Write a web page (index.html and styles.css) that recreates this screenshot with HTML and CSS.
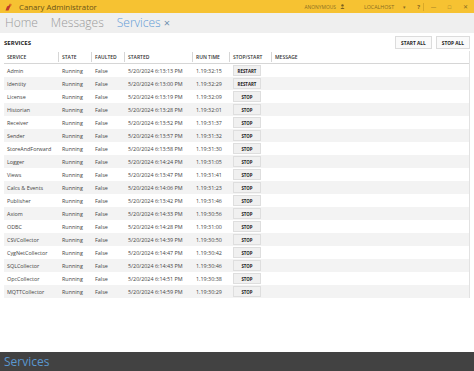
FILE: index.html
```html
<!DOCTYPE html>
<html lang="en">
<head>
  <meta charset="UTF-8">
  <title>Canary Administrator</title>
  <link rel="stylesheet" href="styles.css">
</head>
<body>
  <!-- Window title bar -->
  <div class="titlebar">
    <div class="title-left">
      <svg class="app-icon" width="7" height="8" viewBox="0 0 7 8">
        <path d="M0.5 7.5 L2 3.5 L4 2.5 L5 0.5 L6.5 2 L5 4 L3.5 7.5 Z" fill="#c0392b"/>
        <path d="M4.5 2 L6 0.8 L6.8 1.6 L5.5 3 Z" fill="#e67e22"/>
      </svg>
      <span class="app-title">Canary Administrator</span>
    </div>
    <div class="title-right">
      <span>ANONYMOUS</span>
      <svg class="user-icon" width="5" height="5" viewBox="0 0 5 5"><circle cx="2.5" cy="1.4" r="1.2" fill="#7a6020"/><path d="M0.4 5 Q2.5 1.8 4.6 5 Z" fill="#7a6020"/></svg>
      <span class="host">LOCALHOST</span>
      <span class="caret">&#9662;</span>
      <span class="help">?</span>
      <span class="divider"></span>
      <span class="winbtn">&#8212;</span>
      <span class="winbtn">&#9633;</span>
      <span class="winbtn">&#10005;</span>
    </div>
  </div>

  <!-- Tabs -->
  <div class="tabbar">
    <span class="tab">Home</span>
    <span class="tab">Messages</span>
    <span class="tab active">Services <span class="tab-close">&#215;</span></span>
  </div>

  <div class="content">
    <div class="toolbar">
      <span class="section-title">SERVICES</span>
      <div class="toolbar-buttons">
        <button class="btn">START ALL</button>
        <button class="btn">STOP ALL</button>
      </div>
    </div>

    <div class="table">
      <div class="row head">
        <div class="cell">SERVICE</div>
        <div class="cell">STATE</div>
        <div class="cell">FAULTED</div>
        <div class="cell">STARTED</div>
        <div class="cell">RUN TIME</div>
        <div class="cell">STOP/START</div>
        <div class="cell">MESSAGE</div>
      </div>
      <div class="row"><div class="cell">Admin</div><div class="cell">Running</div><div class="cell">False</div><div class="cell">5/20/2024 6:13:13 PM</div><div class="cell">1.19:32:15</div><div class="cell"><button class="small-btn">RESTART</button></div><div class="cell"></div></div>
      <div class="row"><div class="cell">Identity</div><div class="cell">Running</div><div class="cell">False</div><div class="cell">5/20/2024 6:13:00 PM</div><div class="cell">1.19:32:29</div><div class="cell"><button class="small-btn">RESTART</button></div><div class="cell"></div></div>
      <div class="row"><div class="cell">License</div><div class="cell">Running</div><div class="cell">False</div><div class="cell">5/20/2024 6:13:19 PM</div><div class="cell">1.19:32:09</div><div class="cell"><button class="small-btn">STOP</button></div><div class="cell"></div></div>
      <div class="row"><div class="cell">Historian</div><div class="cell">Running</div><div class="cell">False</div><div class="cell">5/20/2024 6:13:28 PM</div><div class="cell">1.19:32:01</div><div class="cell"><button class="small-btn">STOP</button></div><div class="cell"></div></div>
      <div class="row"><div class="cell">Receiver</div><div class="cell">Running</div><div class="cell">False</div><div class="cell">5/20/2024 6:13:52 PM</div><div class="cell">1.19:31:37</div><div class="cell"><button class="small-btn">STOP</button></div><div class="cell"></div></div>
      <div class="row"><div class="cell">Sender</div><div class="cell">Running</div><div class="cell">False</div><div class="cell">5/20/2024 6:13:57 PM</div><div class="cell">1.19:31:32</div><div class="cell"><button class="small-btn">STOP</button></div><div class="cell"></div></div>
      <div class="row"><div class="cell">StoreAndForward</div><div class="cell">Running</div><div class="cell">False</div><div class="cell">5/20/2024 6:13:58 PM</div><div class="cell">1.19:31:30</div><div class="cell"><button class="small-btn">STOP</button></div><div class="cell"></div></div>
      <div class="row"><div class="cell">Logger</div><div class="cell">Running</div><div class="cell">False</div><div class="cell">5/20/2024 6:14:24 PM</div><div class="cell">1.19:31:05</div><div class="cell"><button class="small-btn">STOP</button></div><div class="cell"></div></div>
      <div class="row"><div class="cell">Views</div><div class="cell">Running</div><div class="cell">False</div><div class="cell">5/20/2024 6:13:47 PM</div><div class="cell">1.19:31:41</div><div class="cell"><button class="small-btn">STOP</button></div><div class="cell"></div></div>
      <div class="row"><div class="cell">Calcs &amp; Events</div><div class="cell">Running</div><div class="cell">False</div><div class="cell">5/20/2024 6:14:06 PM</div><div class="cell">1.19:31:23</div><div class="cell"><button class="small-btn">STOP</button></div><div class="cell"></div></div>
      <div class="row"><div class="cell">Publisher</div><div class="cell">Running</div><div class="cell">False</div><div class="cell">5/20/2024 6:13:42 PM</div><div class="cell">1.19:31:46</div><div class="cell"><button class="small-btn">STOP</button></div><div class="cell"></div></div>
      <div class="row"><div class="cell">Axiom</div><div class="cell">Running</div><div class="cell">False</div><div class="cell">5/20/2024 6:14:33 PM</div><div class="cell">1.19:30:56</div><div class="cell"><button class="small-btn">STOP</button></div><div class="cell"></div></div>
      <div class="row"><div class="cell">ODBC</div><div class="cell">Running</div><div class="cell">False</div><div class="cell">5/20/2024 6:14:28 PM</div><div class="cell">1.19:31:00</div><div class="cell"><button class="small-btn">STOP</button></div><div class="cell"></div></div>
      <div class="row"><div class="cell">CSVCollector</div><div class="cell">Running</div><div class="cell">False</div><div class="cell">5/20/2024 6:14:39 PM</div><div class="cell">1.19:30:50</div><div class="cell"><button class="small-btn">STOP</button></div><div class="cell"></div></div>
      <div class="row"><div class="cell">CygNetCollector</div><div class="cell">Running</div><div class="cell">False</div><div class="cell">5/20/2024 6:14:47 PM</div><div class="cell">1.19:30:42</div><div class="cell"><button class="small-btn">STOP</button></div><div class="cell"></div></div>
      <div class="row"><div class="cell">SQLCollector</div><div class="cell">Running</div><div class="cell">False</div><div class="cell">5/20/2024 6:14:43 PM</div><div class="cell">1.19:30:46</div><div class="cell"><button class="small-btn">STOP</button></div><div class="cell"></div></div>
      <div class="row"><div class="cell">OpcCollector</div><div class="cell">Running</div><div class="cell">False</div><div class="cell">5/20/2024 6:14:51 PM</div><div class="cell">1.19:30:38</div><div class="cell"><button class="small-btn">STOP</button></div><div class="cell"></div></div>
      <div class="row"><div class="cell">MQTTCollector</div><div class="cell">Running</div><div class="cell">False</div><div class="cell">5/20/2024 6:14:59 PM</div><div class="cell">1.19:30:29</div><div class="cell"><button class="small-btn">STOP</button></div><div class="cell"></div></div>
    </div>
  </div>

  <!-- Status footer -->
  <div class="footer">Services</div>
</body>
</html>
```

FILE: styles.css
```css
body {
  margin: 0; padding: 0;
  width: 474px; height: 371px;
  display: flex; flex-direction: column;
  font-family: "Open Sans", "Noto Sans", sans-serif;
  background-color: #fff;
  overflow: hidden;
}

/* Title bar */
.titlebar {
  height: 13px;
  flex: none;
  background-color: #f6c232;
  display: flex;
  align-items: center;
  justify-content: space-between;
  padding: 0 2px 0 5px;
}
.title-left {
  display: flex; align-items: center; gap: 7px;
}
.app-title {
  font-size: 7.8px;
  color: #6b5318;
}
.title-right {
  display: flex; align-items: center; gap: 3px;
  font-size: 4.9px;
  color: #8a6d22;
}
.title-right .user-icon { margin-left: 1px; }
.title-right .host { margin-left: 16px; font-size: 5.3px; }
.title-right .caret { font-size: 5px; margin: 0 8px 0 6px; }
.title-right .help { font-size: 6px; font-weight: bold; }
.title-right .divider {
  width: 1px; height: 8px;
  background-color: #d9a928;
}
.winbtn {
  font-size: 5.5px;
  width: 13px;
  text-align: center;
}

/* Tab strip */
.tabbar {
  height: 20px;
  flex: none;
  background-color: #efefef;
  display: flex;
  align-items: center;
  gap: 13px;
  padding-left: 5px;
}
.tab {
  font-size: 12px;
  font-weight: 300;
  color: #9b9b9b;
  line-height: 20px;
}
.tab.active { color: #5f9bd6; }
.tab-close {
  font-size: 11px;
  color: #6f8fb0;
  font-weight: 400;
}

/* Main content */
.content {
  flex: 1;
  padding: 0 4px;
}
.toolbar {
  display: flex;
  align-items: center;
  justify-content: space-between;
  height: 13px;
  margin-top: 3px;
}
.section-title {
  font-size: 6px;
  font-weight: bold;
  color: #222;
}
.toolbar-buttons {
  display: flex; gap: 4px;
}
.btn {
  font-family: inherit;
  font-size: 4.8px;
  font-weight: bold;
  color: #222;
  background-color: #fafafa;
  border: 1px solid #dcdcdc;
  height: 13px;
  padding: 0 5px;
}

/* Services table */
.table {
  border-right: 1px solid #e2e2e2;
  margin-top: 2px;
}
.row {
  display: grid;
  grid-template-columns: 55px 33px 33px 68px 37px 42px 1fr;
  height: 13px;
  align-items: center;
  font-size: 5.4px;
  color: #444;
}
.row:nth-child(odd) { background-color: #f3f3f3; }
.row.head {
  background-color: #fff;
  border-bottom: 1px solid #d6d6d6;
  height: 12px;
  font-weight: 600;
  font-size: 5px;
  color: #333;
}
.cell {
  padding-left: 3px;
  white-space: nowrap;
  overflow: hidden;
}
.row.head .cell {
  border-right: 1px solid #d6d6d6;
  height: 10px;
  line-height: 10px;
}
.row.head .cell:last-child { border-right: none; }
.small-btn {
  font-family: inherit;
  font-size: 4.4px;
  font-weight: bold;
  color: #222;
  background-color: #f0f0f0;
  border: 1px solid #dedede;
  width: 28px;
  height: 11px;
  padding: 0;
  display: block;
}

/* Footer status bar */
.footer {
  height: 19px;
  flex: none;
  background-color: #424242;
  color: #5a97cf;
  font-size: 12px;
  line-height: 19px;
  padding-left: 4px;
}
```
